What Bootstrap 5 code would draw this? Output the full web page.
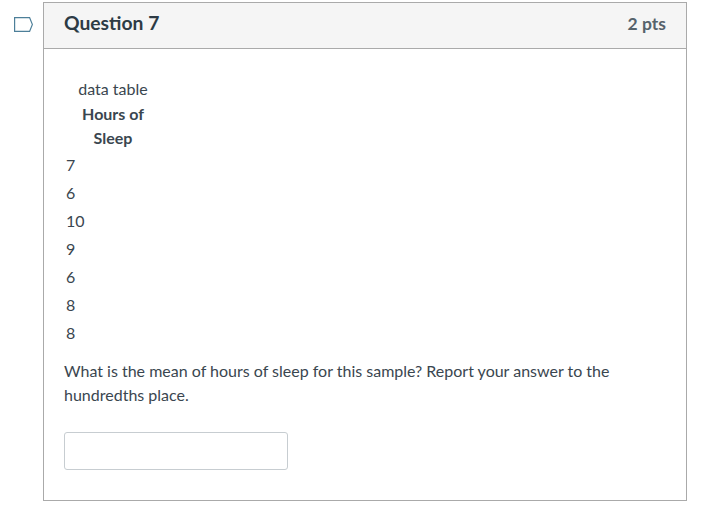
<!DOCTYPE html>
<html lang="en">
<head>
<meta charset="utf-8">
<title>Question 7</title>
<link href="https://cdn.jsdelivr.net/npm/bootstrap@5.3.0/dist/css/bootstrap.min.css" rel="stylesheet">
<style>
body { font-family: Lato, "Liberation Sans", sans-serif; font-size: 16px; color: #3a464f; background: #fff; }
.quiz-page { padding: 2px 27px 0 14px; gap: 10px; }
.flag-icon { width: 19px; height: 15px; margin-top: 15px; flex: none; }
.quiz-card { width: 644px; height: 499px; border: 1px solid #aaa; border-radius: 0; }
.quiz-head { height: 46px; padding: 0 20px; background: #f5f5f5; border-bottom: 1px solid #aaa; }
.quiz-title { font-size: 19.3px; font-weight: 700; line-height: 1; margin: 0 0 6px; color: #2d3b45; }
.quiz-pts { font-size: 17.5px; font-weight: 700; color: #56626b; margin-bottom: 2px; }
.quiz-body { padding: 28px 20px 0; }
.sleep-table { width: 98px; border-collapse: collapse; margin-bottom: 12px; }
.sleep-table caption { caption-side: top; padding: 0; color: #3a464f; text-align: center; line-height: 24px; }
.sleep-table th { padding: 1px 0; font-weight: 700; text-align: center; line-height: 24px; }
.sleep-table td { padding: 0 2px; height: 28px; line-height: 24px; }
.quiz-text { line-height: 24px; margin: 0 40px 25px 0; }
.quiz-input { width: 224px; height: 38px; border: 1px solid #c7cdd1; border-radius: 3px; box-shadow: none; }
</style>
</head>
<body>
<div class="quiz-page d-flex align-items-start">
  <svg class="flag-icon" viewBox="0 0 19 15" aria-hidden="true">
    <path d="M.6.6H15.6L18.4 7.5 15.6 14.4H.6Z" fill="#fff" stroke="#4d7f99" stroke-width="1.2"/>
  </svg>
  <div class="card quiz-card">
    <div class="quiz-head d-flex justify-content-between align-items-center">
      <h2 class="quiz-title">Question 7</h2>
      <div class="quiz-pts">2 pts</div>
    </div>
    <div class="quiz-body">
      <table class="sleep-table">
        <caption>data table</caption>
        <thead><tr><th>Hours of Sleep</th></tr></thead>
        <tbody>
          <tr><td>7</td></tr>
          <tr><td>6</td></tr>
          <tr><td>10</td></tr>
          <tr><td>9</td></tr>
          <tr><td>6</td></tr>
          <tr><td>8</td></tr>
          <tr><td>8</td></tr>
        </tbody>
      </table>
      <p class="quiz-text">What is the mean of hours of sleep for this sample? Report your answer to the hundredths place.</p>
      <input type="text" class="form-control quiz-input" aria-label="Answer">
    </div>
  </div>
</div>
<script src="https://cdn.jsdelivr.net/npm/bootstrap@5.3.0/dist/js/bootstrap.bundle.min.js"></script>
</body>
</html>
